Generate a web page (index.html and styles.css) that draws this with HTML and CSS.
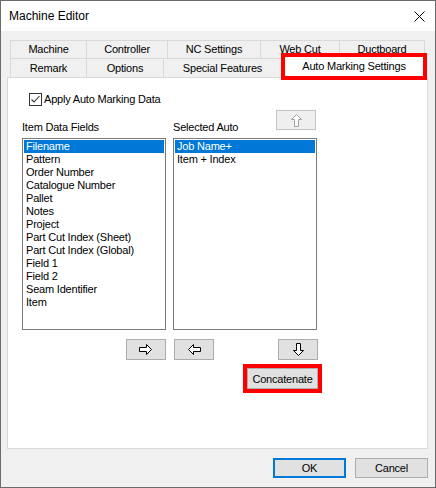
FILE: index.html
```html
<!DOCTYPE html>
<html>
<head>
<meta charset="utf-8">
<link rel="stylesheet" href="styles.css">
</head>
<body>
<div class="window">
  <div class="titlebar">
    <span class="title">Machine Editor</span>
    <svg class="close" width="11" height="11" viewBox="0 0 11 11"><path d="M0.5 0.5 L10.5 10.5 M10.5 0.5 L0.5 10.5" stroke="#000" stroke-width="1" fill="none"/></svg>
  </div>
  <div class="content">
    <div class="tabs">
      <div class="tabrow row1">
        <div class="tab tw-machine">Machine</div>
        <div class="tab tw-controller">Controller</div>
        <div class="tab tw-nc">NC Settings</div>
        <div class="tab tw-web">Web Cut</div>
        <div class="tab tw-duct last">Ductboard</div>
      </div>
      <div class="tabrow row2">
        <div class="tab tw-remark">Remark</div>
        <div class="tab tw-options">Options</div>
        <div class="tab tw-special">Special Features</div>
        <div class="tab selected">Auto Marking Settings<span class="redbox"></span></div>
      </div>
    </div>
    <div class="panel">
      <div class="check-row">
        <span class="checkbox"><svg width="11" height="11" viewBox="0 0 11 11"><path d="M1.5 5.5 L4 8 L9.5 2" stroke="#333" stroke-width="1.1" fill="none"/></svg></span>
        <span class="check-label">Apply Auto Marking Data</span>
      </div>
      <div class="grid">
        <div class="head">
          <span class="head-label">Item Data Fields</span>
        </div>
        <div class="head">
          <span class="head-label">Selected Auto</span>
          <button class="btn arrow-btn disabled up-btn"><svg width="11" height="14" viewBox="0 0 11 14"><path d="M3.5 13.5 H7.5 V6.5 H10.5 L5.5 1.5 L0.5 6.5 H3.5 Z" stroke="#a0a0a0" stroke-width="1" fill="#fff"/></svg></button>
        </div>
        <div class="list">
          <div class="item sel">Filename</div>
          <div class="item">Pattern</div>
          <div class="item">Order Number</div>
          <div class="item">Catalogue Number</div>
          <div class="item">Pallet</div>
          <div class="item">Notes</div>
          <div class="item">Project</div>
          <div class="item">Part Cut Index (Sheet)</div>
          <div class="item">Part Cut Index (Global)</div>
          <div class="item">Field 1</div>
          <div class="item">Field 2</div>
          <div class="item">Seam Identifier</div>
          <div class="item">Item</div>
        </div>
        <div class="list">
          <div class="item sel">Job Name+</div>
          <div class="item">Item + Index</div>
        </div>
        <div class="arrows-left">
          <button class="btn arrow-btn"><svg width="14" height="11" viewBox="0 0 14 11"><path d="M0.5 3.5 H7.5 V0.5 L12.5 5.5 L7.5 10.5 V7.5 H0.5 Z" stroke="#000" stroke-width="1" fill="#fff"/></svg></button>
        </div>
        <div class="arrows-right">
          <button class="btn arrow-btn left-btn"><svg width="14" height="11" viewBox="0 0 14 11"><path d="M13.5 3.5 H6.5 V0.5 L1.5 5.5 L6.5 10.5 V7.5 H13.5 Z" stroke="#000" stroke-width="1" fill="#fff"/></svg></button>
          <button class="btn arrow-btn down-btn"><svg width="11" height="14" viewBox="0 0 11 14"><path d="M3.5 0.5 H7.5 V7.5 H10.5 L5.5 12.5 L0.5 7.5 H3.5 Z" stroke="#000" stroke-width="1" fill="#fff"/></svg></button>
        </div>
        <div class="spacer"></div>
        <div class="concat-cell">
          <button class="btn concat">Concatenate</button>
        </div>
      </div>
    </div>
    <div class="footer">
      <button class="btn dlg ok">OK</button>
      <button class="btn dlg">Cancel</button>
    </div>
  </div>
</div>
</body>
</html>
```
FILE: styles.css
```css
* { box-sizing: border-box; }
html, body { margin: 0; padding: 0; background: #fff; }
body {
  font-family: "Liberation Sans", Arial, sans-serif;
  font-size: 11px;
  letter-spacing: -0.2px;
  color: #000;
}
.window {
  width: 436px;
  height: 488px;
  border: 1px solid #6b6b6b;
  background: #f0f0f0;
  display: flex;
  flex-direction: column;
}
.titlebar {
  height: 30px;
  background: #fff;
  display: flex;
  align-items: center;
  justify-content: space-between;
  padding: 0 10px 0 8px;
  flex: none;
}
.title {
  font-size: 12px;
  letter-spacing: 0;
}
.close { display: block; }
.content {
  padding-top: 9px;
}
.tabs {
  margin-left: 9px;
}
.tabrow {
  display: flex;
  align-items: flex-start;
}
.tab {
  border-left: 1px solid #d9d9d9;
  border-top: 1px solid #d9d9d9;
  text-align: center;
  white-space: nowrap;
  background: #f0f0f0;
}
.tab.last { border-right: 1px solid #d9d9d9; }
.row1 .tab { height: 18px; line-height: 17px; }
.row2 .tab { height: 19px; line-height: 18px; }
.tw-machine { width: 76px; }
.tw-controller { width: 81px; }
.tw-nc { width: 93px; }
.tw-web { width: 79px; }
.tw-duct { width: 86px; }
.tw-remark { width: 76px; }
.tw-options { width: 77px; }
.tw-special { width: 118px; }
.row2 .tab.selected {
  position: relative;
  z-index: 2;
  width: 146px;
  height: 22px;
  margin-top: -2px;
  margin-bottom: -1px;
  line-height: 18px;
  padding-bottom: 3px;
  background: #fff;
  border-right: 1px solid #d9d9d9;
}
.redbox {
  position: absolute;
  left: -1px;
  top: -4px;
  width: 146px;
  height: 27px;
  border: 4px solid #f00;
}
.panel {
  width: 421px;
  height: 372px;
  margin-left: 6px;
  border: 1px solid #d9d9d9;
  background: #fff;
  padding: 15px 0 0 14px;
}
.check-row {
  display: flex;
  align-items: center;
  gap: 2px;
  margin-left: 7px;
  height: 13px;
}
.checkbox {
  width: 13px;
  height: 13px;
  border: 1px solid #333;
  background: #fff;
  display: flex;
  align-items: center;
  justify-content: center;
}
.checkbox svg { display: block; }
.check-label { line-height: 13px; }
.grid {
  display: grid;
  grid-template-columns: 144px 144px;
  grid-template-rows: 28px 192px auto auto;
  column-gap: 7px;
  margin-top: 4px;
}
.head {
  display: flex;
  justify-content: space-between;
  align-items: flex-start;
}
.head-label {
  align-self: flex-end;
  line-height: 14px;
  margin-bottom: 4px;
}
.btn {
  font-family: inherit;
  font-size: 11px;
  letter-spacing: -0.2px;
  color: #000;
  background: #e1e1e1;
  border: 1px solid #adadad;
  padding: 0;
  margin: 0;
  display: flex;
  align-items: center;
  justify-content: center;
}
.btn svg { display: block; }
.arrow-btn {
  width: 40px;
  height: 21px;
}
.arrow-btn.disabled {
  background: #efefef;
  border-color: #c4c4c4;
  height: 20px;
}
.up-btn { margin-right: 1px; }
.list {
  border: 1px solid #7a7a7a;
  padding: 1px;
  background: #fff;
}
.item {
  height: 13px;
  line-height: 13px;
  padding-left: 2px;
  white-space: nowrap;
}
.item.sel {
  background: #0078d7;
  color: #fff;
}
.arrows-left {
  display: flex;
  justify-content: flex-end;
  margin-top: 9px;
}
.arrows-right {
  display: flex;
  justify-content: space-between;
  margin-top: 9px;
  margin-right: -1px;
}
.left-btn { margin-left: 1px; }
.concat-cell {
  display: flex;
  justify-content: flex-end;
  margin-top: 8px;
  margin-right: -1px;
}
.concat {
  width: 71px;
  height: 21px;
  outline: 4px solid #f00;
  outline-offset: 0;
}
.footer {
  display: flex;
  justify-content: flex-end;
  gap: 9px;
  margin-top: 9px;
  padding-right: 7px;
}
.dlg {
  width: 73px;
  height: 20px;
}
.dlg.ok {
  border: 2px solid #0078d7;
}
```
